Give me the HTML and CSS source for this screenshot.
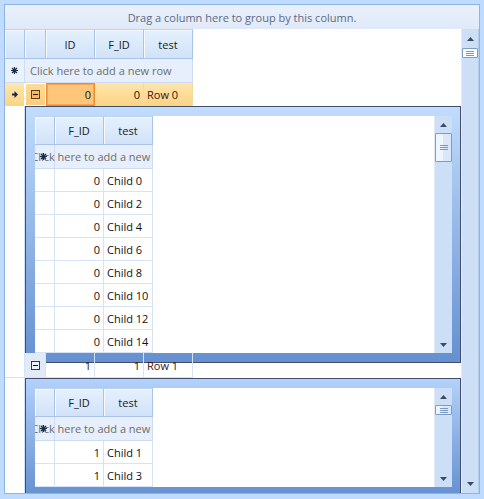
FILE: index.html
```html
<!DOCTYPE html>
<html>
<head>
<meta charset="utf-8">
<link rel="stylesheet" href="styles.css">
</head>
<body>
<div class="grid">
  <div class="group-panel">Drag a column here to group by this column.</div>
  <div class="main">
    <div class="data">
      <div class="row hdr">
        <div class="hcell"></div><div class="hcell"></div><div class="hcell">ID</div><div class="hcell">F_ID</div><div class="hcell">test</div>
      </div>
      <div class="row newrow">
        <div class="ind"><svg class="ast" width="7" height="7" viewBox="0 0 7 7"><path d="M3.5 0V7M0 3.5H7M1 1L6 6M6 1L1 6"/></svg></div>
        <div class="ntext">Click here to add a new row</div>
      </div>
      <div class="row sel">
        <div class="ind"><svg width="6" height="7" viewBox="0 0 6 7"><path d="M0 2.5H2.5V0L6 3.5L2.5 7V4.5H0Z"/></svg></div>
        <div class="exp"><svg width="9" height="9" viewBox="0 0 9 9"><rect x=".5" y=".5" width="8" height="8" fill="#f9bb62" stroke="#5e3d19"/><path d="M2 4.5H7" stroke="#2b1c0a"/></svg></div>
        <div class="cell num focus">0</div>
        <div class="cell num">0</div>
        <div class="cell txt">Row 0</div>
      </div>
      <div class="detail d1">
        <div class="dind"></div>
        <div class="frame">
          <div class="inner">
            <div class="igrid">
              <div class="irow ihdr"><div class="hcell"></div><div class="hcell">F_ID</div><div class="hcell">test</div></div>
              <div class="irow inew">
                <div class="iind"></div>
                <div class="itext"><span>Click here to add a new row</span></div>
                <svg class="ast iast" width="7" height="7" viewBox="0 0 7 7"><path d="M3.5 0V7M0 3.5H7M1 1L6 6M6 1L1 6"/></svg>
              </div>
              <div class="irow child"><div class="c"></div><div class="c num">0</div><div class="c txt">Child 0</div></div>
              <div class="irow child"><div class="c"></div><div class="c num">0</div><div class="c txt">Child 2</div></div>
              <div class="irow child"><div class="c"></div><div class="c num">0</div><div class="c txt">Child 4</div></div>
              <div class="irow child"><div class="c"></div><div class="c num">0</div><div class="c txt">Child 6</div></div>
              <div class="irow child"><div class="c"></div><div class="c num">0</div><div class="c txt">Child 8</div></div>
              <div class="irow child"><div class="c"></div><div class="c num">0</div><div class="c txt">Child 10</div></div>
              <div class="irow child"><div class="c"></div><div class="c num">0</div><div class="c txt">Child 12</div></div>
              <div class="irow child"><div class="c"></div><div class="c num">0</div><div class="c txt">Child 14</div></div>
            </div>
            <div class="vs ivs">
              <div class="btn ib"><svg width="7" height="4" viewBox="0 0 7 4"><path d="M0 4H7L3.5 0Z"/></svg></div>
              <div class="thumb t-big"><div class="grip"></div></div>
              <div class="track"></div>
              <div class="btn ib"><svg width="7" height="4" viewBox="0 0 7 4"><path d="M0 0H7L3.5 4Z"/></svg></div>
            </div>
          </div>
        </div>
      </div>
      <div class="row r1">
        <div class="ind"></div>
        <div class="exp"><svg width="9" height="9" viewBox="0 0 9 9"><rect x=".5" y=".5" width="8" height="8" fill="#eef3fa" stroke="#27395a"/><path d="M2 4.5H7" stroke="#111"/></svg></div>
        <div class="cell num">1</div>
        <div class="cell num">1</div>
        <div class="cell txt">Row 1</div>
      </div>
      <div class="detail d2">
        <div class="dind"></div>
        <div class="frame">
          <div class="inner">
            <div class="igrid">
              <div class="irow ihdr"><div class="hcell"></div><div class="hcell">F_ID</div><div class="hcell">test</div></div>
              <div class="irow inew">
                <div class="iind"></div>
                <div class="itext"><span>Click here to add a new row</span></div>
                <svg class="ast iast" width="7" height="7" viewBox="0 0 7 7"><path d="M3.5 0V7M0 3.5H7M1 1L6 6M6 1L1 6"/></svg>
              </div>
              <div class="irow child"><div class="c"></div><div class="c num">1</div><div class="c txt">Child 1</div></div>
              <div class="irow child"><div class="c"></div><div class="c num">1</div><div class="c txt">Child 3</div></div>
            </div>
            <div class="vs ivs">
              <div class="btn ib"><svg width="7" height="4" viewBox="0 0 7 4"><path d="M0 4H7L3.5 0Z"/></svg></div>
              <div class="thumb t-small"><div class="grip"></div></div>
              <div class="track"></div>
              <div class="btn ib"><svg width="7" height="4" viewBox="0 0 7 4"><path d="M0 0H7L3.5 4Z"/></svg></div>
            </div>
          </div>
        </div>
      </div>
    </div>
    <div class="vs ovs">
      <div class="btn ob-up"><svg width="7" height="4" viewBox="0 0 7 4"><path d="M0 4H7L3.5 0Z"/></svg></div>
      <div class="thumb t-outer"><div class="grip"></div></div>
      <div class="track"></div>
      <div class="btn ob-dn"><svg width="7" height="4" viewBox="0 0 7 4"><path d="M0 0H7L3.5 4Z"/></svg></div>
    </div>
  </div>
</div>
</body>
</html>
```

FILE: styles.css
```css
* { box-sizing: border-box; }
body {
  margin: 0;
  padding: 4px;
  background: #bfdbff;
  font-family: "Open Sans", "Noto Sans", sans-serif;
  font-size: 11px;
  color: #111;
}
.grid {
  width: 476px;
  height: 490px;
  border: 1px solid #8fb3e2;
  background: #fff;
  display: flex;
  flex-direction: column;
}
.group-panel {
  height: 24px;
  flex: none;
  display: flex;
  align-items: center;
  justify-content: center;
  background: linear-gradient(#e9f1fc, #dfe9f8);
  color: #5d6a82;
}
.main { flex: 1; display: flex; min-height: 0; }
.data { flex: 1; overflow: hidden; display: flex; flex-direction: column; min-width: 0; }
.row {
  display: grid;
  grid-template-columns: 20px 21px 49px 49px 49px;
  flex: none;
}
.hdr { height: 30px; }
.hcell {
  background: linear-gradient(#e5f0fd, #d1e3f9);
  border-top: 1px solid #bcd3f0;
  border-right: 1px solid #a9c4e8;
  border-bottom: 1px solid #a9c4e8;
  box-shadow: inset 1px 1px 0 #f6faff;
  display: flex;
  align-items: center;
  justify-content: center;
  color: #1a1a1a;
}
.newrow { height: 24px; }
.newrow .ind {
  background: #e9f1fc;
  border-right: 1px solid #cddcf0;
  border-bottom: 1px solid #cddcf0;
  display: flex;
  align-items: center;
  justify-content: center;
}
.newrow .ntext {
  grid-column: 2 / 6;
  background: #e6effb;
  border-right: 1px solid #cddcf0;
  border-bottom: 1px solid #cddcf0;
  color: #6d6d6d;
  padding-left: 5px;
  display: flex;
  align-items: center;
  white-space: nowrap;
}
.ast path { stroke: #1b2c4d; stroke-width: 1.2; fill: none; }
.sel { height: 23px; }
.sel .ind {
  background: linear-gradient(#fee7ae, #fcd384);
  border-right: 1px solid #fff;
  display: flex;
  align-items: center;
  justify-content: center;
}
.sel .ind path { fill: #15284a; }
.sel .exp {
  background: linear-gradient(#fddc98, #fbcd7c);
  border: 1px solid #fff;
  display: flex;
  align-items: center;
  justify-content: center;
}
.cell {
  display: flex;
  align-items: center;
  border-right: 1px solid #d6e3f4;
  border-bottom: 1px solid #d6e3f4;
  color: #111;
}
.sel .cell {
  background: linear-gradient(#fee6ad, #fcd383);
  border-right: 1px solid #f6dba0;
  border-bottom: none;
}
.sel .cell.focus {
  background: #fdc67b;
  border: 1px solid #f08a30;
  box-shadow: inset 0 0 0 1px #f7a650;
}
.num { justify-content: flex-end; padding-right: 3px; }
.txt { padding-left: 3px; white-space: nowrap; }
.sel .txt, .r1 .txt { color: #3b1212; }
.detail { display: grid; grid-template-columns: 20px 436px; flex: none; }
.dind { border-right: 1px solid #d4e1f3; background: #fff; }
.d1 { height: 247px; }
.d2 { height: 113px; }
.frame {
  border: 1px solid #414d69;
  padding: 9px 8px 9px 9px;
  background: linear-gradient(#c1dcfd, #6590d0);
  display: flex;
}
.d2 .frame { background: linear-gradient(#b3d1fb, #6590d0); }
.inner { flex: 1; background: #fff; display: flex; min-width: 0; }
.igrid { flex: 1; overflow: hidden; display: flex; flex-direction: column; min-width: 0; }
.irow {
  display: grid;
  grid-template-columns: 20px 49px 49px;
  width: 118px;
  flex: none;
}
.ihdr { height: 29px; }
.inew {
  height: 24px;
  position: relative;
  overflow: hidden;
  background: #e6effb;
  border-bottom: 1px solid #cddcf0;
  border-right: 1px solid #cddcf0;
}
.iind { grid-column: 1; grid-row: 1; border-right: 1px solid #cddcf0; }
.itext {
  grid-column: 2 / 4;
  grid-row: 1;
  min-width: 0;
  padding-right: 4px;
  display: flex;
  justify-content: center;
  align-items: center;
  white-space: nowrap;
  color: #6d6d6d;
}
.itext span { flex: none; }
.iast { position: absolute; left: 5px; top: 8px; }
.child { height: 23px; }
.child .c {
  display: flex;
  align-items: center;
  border-right: 1px solid #d6e3f4;
  border-bottom: 1px solid #d6e3f4;
}
.r1 { height: 25px; }
.r1 .ind { border-right: 1px solid #d6e3f4; border-bottom: 1px solid #d6e3f4; }
.r1 .exp {
  background: #e1eaf6;
  border-right: 1px solid #d6e3f4;
  border-bottom: 1px solid #d6e3f4;
  display: flex;
  align-items: center;
  justify-content: center;
}
.vs {
  width: 18px;
  flex: none;
  background: #cddff6;
  border-left: 1px solid #e0e9f6;
  display: flex;
  flex-direction: column;
}
.vs path { fill: #3d4a62; }
.btn { flex: none; display: flex; align-items: center; justify-content: center; }
.track { flex: 1; }
.ib { height: 17px; }
.ob-up { height: 19px; }
.ob-dn { height: 18px; }
.ovs { border-right: 1px solid #b4cbea; }
.thumb {
  flex: none;
  border: 1px solid #7f9cc4;
  border-radius: 1px;
  display: flex;
  align-items: center;
  justify-content: center;
}
.t-outer { height: 10px; background: #fbfdff; }
.t-big { height: 29px; background: linear-gradient(90deg, #eef5fe 50%, #d9e7f9 50%); }
.t-small { height: 10px; background: linear-gradient(90deg, #eef5fe 50%, #d9e7f9 50%); }
.grip {
  width: 8px;
  height: 5px;
  background: repeating-linear-gradient(#7b98c1 0 1px, transparent 1px 2px);
}
```
